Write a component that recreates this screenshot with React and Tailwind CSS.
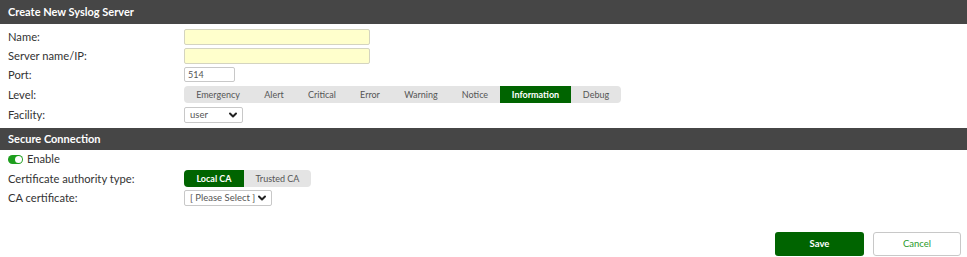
import React, { useState } from "react";
import { ChevronDown } from "lucide-react";

const levels = [
  { name: "Emergency", w: "w-[68px]" },
  { name: "Alert", w: "w-[44px]" },
  { name: "Critical", w: "w-[52px]" },
  { name: "Error", w: "w-[44px]" },
  { name: "Warning", w: "w-[58px]" },
  { name: "Notice", w: "w-[50px]" },
  { name: "Information", w: "w-[71px]" },
  { name: "Debug", w: "w-[50px]" },
];

const Label = ({ children }) => (
  <div className="w-[176px] shrink-0 text-[11.2px] text-[#333] leading-none">{children}</div>
);

const SectionHeader = ({ title, className = "" }) => (
  <div className={`bg-[#464646] text-white font-bold text-[11px] px-2 flex items-center ${className}`}>
    {title}
  </div>
);

const Select = ({ value, width }) => (
  <div className={`${width} h-[16px] border border-[#c8c8c8] rounded-[2px] bg-white flex items-center justify-between pl-[5px] pr-[3px] text-[9.5px] text-[#555] whitespace-nowrap`}>
    <span>{value}</span>
    <ChevronDown size={12} strokeWidth={4} className="text-[#222] shrink-0" />
  </div>
);

export default function App() {
  const [level, setLevel] = useState("Information");
  const [caType, setCaType] = useState("Local CA");

  return (
    <div className="w-[967px] h-[257px] bg-white overflow-hidden" style={{ fontFamily: "Lato, 'Liberation Sans', sans-serif" }}>
      <SectionHeader title="Create New Syslog Server" className="h-[24px]" />

      <div className="px-2 pt-[5px] pb-[5px] flex flex-col">
        <div className="flex items-center">
          <Label>Name:</Label>
          <div className="w-[186px] h-[16px] bg-[#ffffcc] border border-[#d4d4c0] rounded-[2px]" />
        </div>
        <div className="flex items-center mt-[3px]">
          <Label>Server name/IP:</Label>
          <div className="w-[186px] h-[16px] bg-[#ffffcc] border border-[#d4d4c0] rounded-[2px]" />
        </div>
        <div className="flex items-center mt-[3px]">
          <Label>Port:</Label>
          <div className="w-[51px] h-[15px] bg-white border border-[#c8c8c8] rounded-[2px] flex items-center pl-[3px] text-[9px] text-[#555]">514</div>
        </div>
        <div className="flex items-center mt-[4px]">
          <Label>Level:</Label>
          <div className="flex h-[17px] bg-[#e4e4e4] rounded-[4px] overflow-hidden">
            {levels.map((l) => (
              <button
                key={l.name}
                onClick={() => setLevel(l.name)}
                className={`${l.w} flex items-center justify-center text-[9px] leading-none ${
                  level === l.name ? "bg-[#006400] text-white font-bold" : "text-[#555]"
                }`}
              >
                {l.name}
              </button>
            ))}
          </div>
        </div>
        <div className="flex items-center mt-[4px]">
          <Label>Facility:</Label>
          <Select value="user" width="w-[59px]" />
        </div>
      </div>

      <SectionHeader title="Secure Connection" className="h-[22px]" />

      <div className="px-2 flex flex-col pt-[2px]">
        <div className="flex items-center h-[14px] gap-[4px]">
          <div className="w-[15px] h-[9px] rounded-full bg-[#1e9e1e] flex items-center justify-end pr-[1px]">
            <div className="w-[7px] h-[7px] rounded-full bg-white" />
          </div>
          <span className="text-[11.2px] text-[#333] leading-none">Enable</span>
        </div>
        <div className="flex items-center mt-[4px]">
          <Label>Certificate authority type:</Label>
          <div className="flex h-[17px] bg-[#e4e4e4] rounded-[4px] overflow-hidden">
            {["Local CA", "Trusted CA"].map((c) => (
              <button
                key={c}
                onClick={() => setCaType(c)}
                className={`flex items-center justify-center text-[9px] leading-none ${
                  c === "Local CA" ? "w-[60px]" : "w-[67px]"
                } ${caType === c ? "bg-[#006400] text-white font-bold" : "text-[#555]"}`}
              >
                {c}
              </button>
            ))}
          </div>
        </div>
        <div className="flex items-center mt-[3px]">
          <Label>CA certificate:</Label>
          <Select value="[ Please Select ]" width="w-[88px]" />
        </div>

        <div className="flex justify-end gap-[9px] mt-[26px] mr-[-2px]">
          <button className="w-[89px] h-[24px] bg-[#006400] text-white font-bold text-[9.5px] rounded-[3px]">Save</button>
          <button className="w-[88px] h-[24px] bg-white border border-[#c8c8c8] text-[#2a9a2a] text-[9.5px] rounded-[3px]">Cancel</button>
        </div>
      </div>
    </div>
  );
}
